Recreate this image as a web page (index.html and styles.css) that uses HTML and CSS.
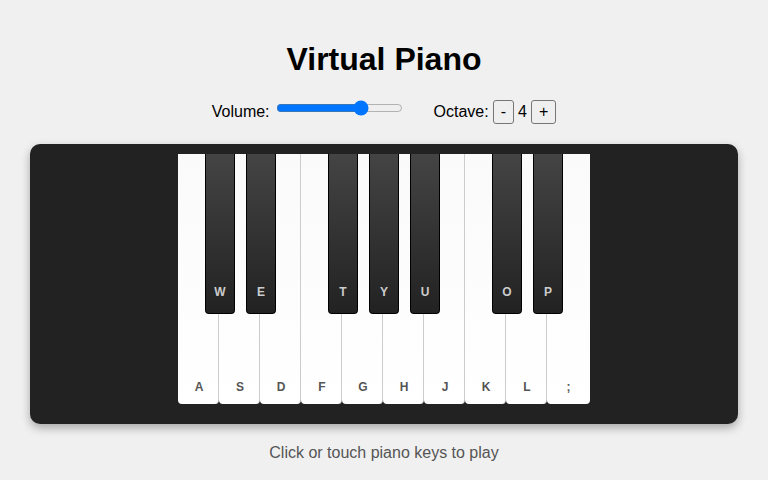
FILE: index.html
```html
<!DOCTYPE html>
<html lang="en">
<head>
<meta charset="utf-8">
<title>Virtual Piano</title>
<link rel="stylesheet" href="styles.css">
</head>
<body>
<h1 class="title">Virtual Piano</h1>
<div class="controls">
  <div class="group"><label for="vol">Volume:</label><input id="vol" class="volume" type="range" min="0" max="100" value="70"></div>
  <div class="group"><span>Octave:</span><button class="btn">-</button><span>4</span><button class="btn">+</button></div>
</div>
<div class="piano">
  <div class="keys">
    <div class="white"><span class="wl">A</span><div class="black"><span class="bl">W</span></div></div>
    <div class="white"><span class="wl">S</span><div class="black"><span class="bl">E</span></div></div>
    <div class="white"><span class="wl">D</span></div>
    <div class="white"><span class="wl">F</span><div class="black"><span class="bl">T</span></div></div>
    <div class="white"><span class="wl">G</span><div class="black"><span class="bl">Y</span></div></div>
    <div class="white"><span class="wl">H</span><div class="black"><span class="bl">U</span></div></div>
    <div class="white"><span class="wl">J</span></div>
    <div class="white"><span class="wl">K</span><div class="black"><span class="bl">O</span></div></div>
    <div class="white"><span class="wl">L</span><div class="black"><span class="bl">P</span></div></div>
    <div class="white last"><span class="wl">;</span></div>
  </div>
</div>
<p class="hint">Click or touch piano keys to play</p>
</body>
</html>
```

FILE: styles.css
```css
html, body {
  margin: 0;
  padding: 0;
}
body {
  background: #f0f0f0;
  font-family: "Liberation Sans", Arial, sans-serif;
  color: #000;
  padding-top: 40px;
}
.title {
  margin: 0;
  font-size: 32px;
  line-height: 38px;
  text-align: center;
  font-weight: bold;
}
.controls {
  margin-top: 21px;
  display: flex;
  justify-content: center;
  align-items: center;
  gap: 29px;
  height: 25px;
  font-size: 16px;
}
.group {
  display: flex;
  align-items: center;
  gap: 4px;
}
.volume {
  width: 127px;
  margin: 0 2px;
  accent-color: #0075ff;
  position: relative;
  top: -4px;
}
.btn {
  font-family: "Liberation Sans", Arial, sans-serif;
  font-size: 16px;
  line-height: 18px;
  padding: 2px 7px;
  border: 1px solid #767676;
  border-radius: 3px;
  background: #efefef;
  color: #000;
}
.piano {
  margin: 20px 30px 0;
  background: #222;
  border-radius: 10px;
  padding: 10px 0 20px;
  box-shadow: 0 4px 10px rgba(0, 0, 0, 0.3);
  display: flex;
  justify-content: center;
}
.keys {
  display: flex;
}
.white {
  position: relative;
  box-sizing: border-box;
  width: 41px;
  height: 250px;
  background: linear-gradient(to bottom, #fafafa, #fff);
  border-right: 1px solid #ccc;
  border-radius: 0 0 4px 4px;
  display: flex;
  align-items: flex-end;
  justify-content: center;
  padding-bottom: 10px;
  padding-left: 2px;
}
.white.last {
  width: 43px;
  border-right: none;
  padding-right: 2px;
}
.wl {
  font-size: 12px;
  line-height: 14px;
  font-weight: bold;
  color: #555;
}
.black {
  position: absolute;
  z-index: 1;
  top: 0;
  left: 27px;
  box-sizing: border-box;
  width: 30px;
  height: 160px;
  background: linear-gradient(to bottom, #444, #222);
  border: 1px solid #000;
  border-top: none;
  border-radius: 0 0 4px 4px;
  display: flex;
  align-items: flex-end;
  justify-content: center;
  padding-bottom: 14px;
}
.bl {
  font-size: 12px;
  line-height: 14px;
  font-weight: bold;
  color: #ccc;
}
.hint {
  margin: 20px 0 0;
  text-align: center;
  font-size: 16px;
  line-height: 18px;
  color: #555;
}
```
